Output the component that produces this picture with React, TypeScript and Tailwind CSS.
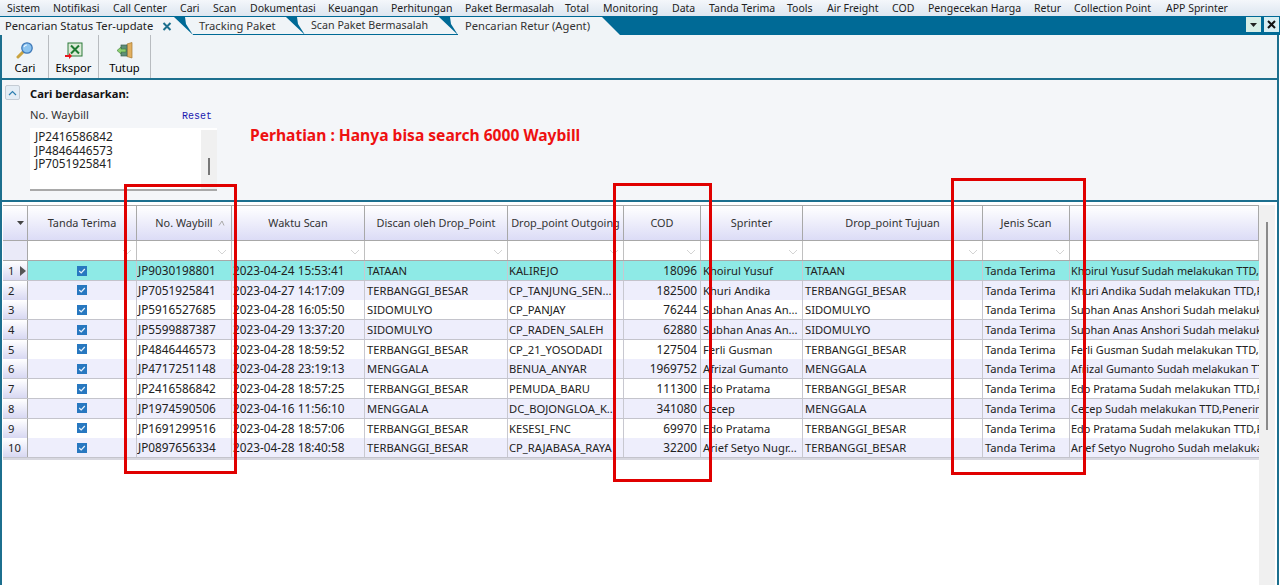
const menus = [
  { label: 'Sistem', width: 'w-[46px]' },
  { label: 'Notifikasi', width: 'w-[60px]' },
  { label: 'Call Center', width: 'w-[67px]' },
  { label: 'Cari', width: 'w-[33px]' },
  { label: 'Scan', width: 'w-[37px]' },
  { label: 'Dokumentasi', width: 'w-[78px]' },
  { label: 'Keuangan', width: 'w-[63px]' },
  { label: 'Perhitungan', width: 'w-[74px]' },
  { label: 'Paket Bermasalah', width: 'w-[100px]' },
  { label: 'Total', width: 'w-[38px]' },
  { label: 'Monitoring', width: 'w-[69px]' },
  { label: 'Data', width: 'w-[37px]' },
  { label: 'Tanda Terima', width: 'w-[78px]' },
  { label: 'Tools', width: 'w-[40px]' },
  { label: 'Air Freight', width: 'w-[65px]' },
  { label: 'COD', width: 'w-[36px]' },
  { label: 'Pengecekan Harga', width: 'w-[106px]' },
  { label: 'Retur', width: 'w-[40px]' },
  { label: 'Collection Point', width: 'w-[92px]' },
  { label: 'APP Sprinter', width: 'w-[70px]' },
];

const columns = ['Tanda Terima', 'No. Waybill', 'Waktu Scan', 'Discan oleh Drop_Point', 'Drop_point Outgoing', 'COD', 'Sprinter', 'Drop_point Tujuan', 'Jenis Scan', ''];

const rows = [
  ['JP9030198801', '2023-04-24 15:53:41', 'TATAAN', 'KALIREJO', '18096', 'Khoirul Yusuf', 'TATAAN', 'Khoirul Yusuf Sudah melakukan TTD,Penerima'],
  ['JP7051925841', '2023-04-27 14:17:09', 'TERBANGGI_BESAR', 'CP_TANJUNG_SEN...', '182500', 'Khuri Andika', 'TERBANGGI_BESAR', 'Khuri Andika Sudah melakukan TTD,Penerima'],
  ['JP5916527685', '2023-04-28 16:05:50', 'SIDOMULYO', 'CP_PANJAY', '76244', 'Subhan Anas An...', 'SIDOMULYO', 'Subhan Anas Anshori Sudah melakukan TTD'],
  ['JP5599887387', '2023-04-29 13:37:20', 'SIDOMULYO', 'CP_RADEN_SALEH', '62880', 'Subhan Anas An...', 'SIDOMULYO', 'Subhan Anas Anshori Sudah melakukan TTD'],
  ['JP4846446573', '2023-04-28 18:59:52', 'TERBANGGI_BESAR', 'CP_21_YOSODADI', '127504', 'Ferli Gusman', 'TERBANGGI_BESAR', 'Ferli Gusman Sudah melakukan TTD,Penerima'],
  ['JP4717251148', '2023-04-28 23:19:13', 'MENGGALA', 'BENUA_ANYAR', '1969752', 'Afrizal Gumanto', 'MENGGALA', 'Afrizal Gumanto Sudah melakukan TTD,Penerima'],
  ['JP2416586842', '2023-04-28 18:57:25', 'TERBANGGI_BESAR', 'PEMUDA_BARU', '111300', 'Edo Pratama', 'TERBANGGI_BESAR', 'Edo Pratama Sudah melakukan TTD,Penerima'],
  ['JP1974590506', '2023-04-16 11:56:10', 'MENGGALA', 'DC_BOJONGLOA_K...', '341080', 'Cecep', 'MENGGALA', 'Cecep Sudah melakukan TTD,Penerima'],
  ['JP1691299516', '2023-04-28 18:57:06', 'TERBANGGI_BESAR', 'KESESI_FNC', '69970', 'Edo Pratama', 'TERBANGGI_BESAR', 'Edo Pratama Sudah melakukan TTD,Penerima'],
  ['JP0897656334', '2023-04-28 18:40:58', 'TERBANGGI_BESAR', 'CP_RAJABASA_RAYA', '32200', 'Arief Setyo Nugr...', 'TERBANGGI_BESAR', 'Arief Setyo Nugroho Sudah melakukan TTD'],
];

const gridCols = 'grid grid-cols-[25px_109px_95px_133px_143px_116px_77px_102px_180px_87px_189px]';

const Chevron = () => (
  <svg width="10" height="6" viewBox="0 0 10 6" className="absolute right-1 top-[8px]">
    <path d="M1 1l4 4 4-4" fill="none" stroke="#d4d4d4" strokeWidth="1" />
  </svg>
);

const Notch = () => (
  <svg width="20" height="18" viewBox="0 0 20 18" className="absolute right-0 top-0">
    <path d="M1 0H12L13 7L20 18Z" fill="#006a96" />
  </svg>
);

const Tick = () => (
  <svg width="10" height="10" viewBox="0 0 10 10">
    <rect width="10" height="10" fill="#2878c0" />
    <path d="M2.2 5l2 2 3.6-4" fill="none" stroke="#e8f2fb" strokeWidth="1.2" />
  </svg>
);

const Toolbar = () => (
  <div className="flex h-[43px] bg-[#f0f4f7]">
    <div className="flex w-[47px] flex-col items-center border-r border-[#b8bcc0] pt-[7px]">
      <svg width="18" height="17" viewBox="0 0 18 17">
        <path d="M2 15l5-5" stroke="#c9a340" strokeWidth="3" strokeLinecap="round" />
        <circle cx="11" cy="6" r="5.2" fill="#8cc4f0" stroke="#3d78b8" strokeWidth="1.3" />
        <path d="M8 5a3 3 0 0 1 3-2" stroke="#e8f4fd" strokeWidth="1.2" fill="none" />
      </svg>
      <span className="mt-[3px]">Cari</span>
    </div>
    <div className="flex w-[50px] flex-col items-center border-r border-[#b8bcc0] pt-[7px]">
      <svg width="18" height="17" viewBox="0 0 18 17">
        <rect x="3" y="1" width="14" height="13" fill="#dcebd8" stroke="#2c7a3a" />
        <path d="M6 3.500l8 8M14 3.500l-8 8" stroke="#1f7a33" strokeWidth="2" />
        <path d="M0 13h4v-2l3 3-3 3v-2H0z" fill="#e8141c" />
      </svg>
      <span className="mt-[3px]">Ekspor</span>
    </div>
    <div className="flex w-[52px] flex-col items-center border-r border-[#b8bcc0] pt-[7px]">
      <svg width="18" height="17" viewBox="0 0 18 17">
        <path d="M11 2l5-1.500V16l-5-1.500z" fill="#e2b060" stroke="#a87a30" strokeWidth="0.7" />
        <rect x="5" y="3" width="6" height="11" fill="#5f8f78" stroke="#3c5f50" strokeWidth="0.7" />
        <path d="M1 8.500l4-3.500v2h5v3H5v2z" fill="#8ccf70" stroke="#3d7a3a" strokeWidth="0.6" />
      </svg>
      <span className="mt-[3px]">Tutup</span>
    </div>
  </div>
);

const SearchPanel = () => (
  <div className="h-[124px] border-y-2 border-[#1c6f8e] bg-[#f4f6f9]">
    <div className="flex items-start pl-[3px] pt-[5px]">
      <div className="flex h-[15px] w-[15px] items-center justify-center rounded-[2px] border border-[#c4ccd4] bg-[#e4edf5]">
        <svg width="9" height="6" viewBox="0 0 9 6">
          <path d="M1 5l3.500-3.500L8 5" fill="none" stroke="#2e7fb0" strokeWidth="1.2" />
        </svg>
      </div>
      <span className="ml-[10px] pt-[3px] font-bold text-[#111]">Cari berdasarkan:</span>
    </div>
    <div className="flex pl-[28px]">
      <div className="w-[188px]">
        <div className="mt-[9px] flex items-start justify-between pr-[6px]">
          <span className="text-[#333]">No. Waybill</span>
          <span className="pt-[3px] font-['Liberation_Mono',monospace] text-[10px] text-[#1a1ab0]">Reset</span>
        </div>
        <div className="mt-[6px] flex h-[63px] w-[187px] border-b-2 border-[#a9a9a9] bg-white pl-[5px] pt-[2px]">
          <div className="flex-1 text-[11.800px] leading-[13.500px] text-[#222]">
            <div>JP2416586842</div>
            <div>JP4846446573</div>
            <div>JP7051925841</div>
          </div>
          <div className="flex w-4 flex-col items-center bg-[#f0f0f0] pt-[28px]">
            <div className="h-[17px] w-[2px] bg-[#777]" />
          </div>
        </div>
      </div>
      <div className="ml-[32px] mt-[28px] text-[15.600px] font-bold text-[#ee1111]">Perhatian : Hanya bisa search 6000 Waybill</div>
    </div>
  </div>
);

const DataGrid = () => (
  <div className="flex bg-white pl-[1px] pt-[3px]">
    <div className="w-[1256px]">
      <div className={`${gridCols} h-[35px] border-t border-[#a8a8a8] text-[10.900px]`}>
        <div className="flex items-center justify-end border-r border-[#a8a8a8] bg-gradient-to-b from-white to-[#dcdcf6] pr-[3px]">
          <svg width="7" height="4" viewBox="0 0 7 4"><path d="M0 0h7L3.500 4z" fill="#444" /></svg>
        </div>
        {columns.map((col) => (
          <div key={col} className="relative flex items-center justify-center whitespace-nowrap border-r border-[#a8a8a8] bg-gradient-to-b from-white to-[#dcdcf6] text-[#333]">
            {col}
            {col === 'No. Waybill' && (
              <svg width="7" height="6" viewBox="0 0 7 6" className="absolute right-[6px] top-[14px]">
                <path d="M1 5.500L4 1l2 4.500" fill="none" stroke="#aaa" />
              </svg>
            )}
          </div>
        ))}
      </div>
      <div className={`${gridCols} h-[21px] border-y border-[#a8a8a8]`}>
        <div className="border-r border-[#a8a8a8] bg-[#eaeaf8]" />
        {columns.map((col) => (
          <div key={col} className="relative border-r border-[#c0c0c0] bg-white">
            {col !== '' && <Chevron />}
          </div>
        ))}
      </div>
      {rows.map((row, i) => {
        const bg = i === 0 ? 'bg-[#8eeae6]' : i % 2 === 1 ? 'bg-[#eeeefc]' : 'bg-white';
        return (
          <div key={row[0]} className={`${gridCols} h-[19.700px] border-b border-[#c4c4cc] leading-[19px] text-[#222]`}>
            <div className="flex items-center border-r border-[#a8a8a8] bg-gradient-to-b from-white to-[#d8d8f2] pl-[5px]">
              {i + 1}
              {i === 0 && (
                <svg width="6" height="10" viewBox="0 0 6 10" className="ml-[6px]"><path d="M0 0l6 5-6 5z" fill="#555" /></svg>
              )}
            </div>
            <div className={`flex items-center justify-center border-r border-[#c8c8d0] ${bg}`}><Tick /></div>
            <div className={`truncate border-r border-[#c8c8d0] pl-[1px] text-[11.800px] ${bg}`}>{row[0]}</div>
            <div className={`truncate border-r border-[#c8c8d0] pl-[1px] text-[11.800px] ${bg}`}>{row[1]}</div>
            <div className={`truncate border-r border-[#c8c8d0] pl-[2px] ${bg}`}>{row[2]}</div>
            <div className={`truncate border-r border-[#c8c8d0] pl-[1px] ${bg}`}>{row[3]}</div>
            <div className={`border-r border-[#c8c8d0] pr-[3px] text-right text-[11.800px] ${bg}`}>{row[4]}</div>
            <div className={`overflow-hidden whitespace-nowrap border-r border-[#c8c8d0] pl-[2px] ${bg}`}>{row[5]}</div>
            <div className={`truncate border-r border-[#c8c8d0] pl-[2px] ${bg}`}>{row[6]}</div>
            <div className={`truncate border-r border-[#c8c8d0] pl-[2px] ${bg}`}>Tanda Terima</div>
            <div className={`overflow-hidden whitespace-nowrap pl-[1px] text-[10.900px] ${bg}`}>{row[7]}</div>
          </div>
        );
      })}
      <div className="h-[2px] bg-[#d8d8e0]" />
    </div>
    <div className="flex h-[380px] w-[16px] justify-center bg-[#f0f0f0] pt-[17px]">
      <div className="h-[208px] w-[2px] bg-[#8a8a8a]" />
    </div>
  </div>
);

export default function App() {
  return (
    <div className="relative h-[585px] w-[1280px] overflow-hidden bg-white font-['Noto_Sans',sans-serif] text-[11.200px] leading-none">
      <div className="flex h-[16px] items-center bg-gradient-to-b from-[#f4f7fb] to-[#dde6f0] pl-[7px] text-[10.500px] text-[#222]">
        {menus.map((m) => <span key={m.label} className={`${m.width} shrink-0 whitespace-nowrap`}>{m.label}</span>)}
      </div>

      <div className="flex h-[19px] items-end justify-between bg-[#006a96]">
        <div className="flex h-[18px] bg-[#f0f4f7]">
          <div className="relative flex w-[193px] items-center pl-[5px] text-[#222]">
            Pencarian Status Ter-update
            <svg width="10" height="9" viewBox="0 0 10 9" className="ml-[9px]">
              <path d="M1.500 1l7 7M8.500 1l-7 7" stroke="#1c6f8e" strokeWidth="2" />
            </svg>
            <Notch />
          </div>
          <div className="relative flex w-[112px] items-center border-b border-[#006a96] pl-[6px] text-[#333]">
            Tracking Paket
            <Notch />
          </div>
          <div className="relative flex w-[153px] items-center border-b border-[#006a96] pl-[6px] text-[10.700px] text-[#333]">
            Scan Paket Bermasalah
            <Notch />
          </div>
          <div className="relative flex w-[162px] items-center pl-[7px] text-[#333]">
            Pencarian Retur (Agent)
            <svg width="18" height="18" viewBox="0 0 18 18" className="absolute right-0 top-0"><path d="M0 0H18V18Z" fill="#006a96" /></svg>
          </div>
        </div>
        <div className="flex gap-[3px] self-start pr-[1px] pt-[1px]">
          <div className="flex h-[15px] w-[15px] items-center justify-center bg-[#d8eee6]">
            <svg width="7" height="4" viewBox="0 0 7 4"><path d="M0 0h7L3.500 4z" fill="#222" /></svg>
          </div>
          <div className="flex h-[15px] w-[15px] items-center justify-center bg-[#d8eef2]">
            <svg width="9" height="9" viewBox="0 0 9 9"><path d="M1 1l7 7M8 1L1 8" stroke="#111" strokeWidth="2" /></svg>
          </div>
        </div>
      </div>

      <div className="w-[1279px] border-x-2 border-l-[#1c6f8e] border-r-[#1c6f8e] bg-white">
        <Toolbar />
        <SearchPanel />
        <DataGrid />
      </div>

      <div className="pointer-events-none absolute left-[124px] top-[184px] h-[290px] w-[113px] border-[3px] border-[#e00000]" />
      <div className="pointer-events-none absolute left-[613px] top-[183px] h-[299px] w-[99px] border-[3px] border-[#e00000]" />
      <div className="pointer-events-none absolute left-[951px] top-[178px] h-[297px] w-[135px] border-[3px] border-[#e00000]" />
    </div>
  );
}
